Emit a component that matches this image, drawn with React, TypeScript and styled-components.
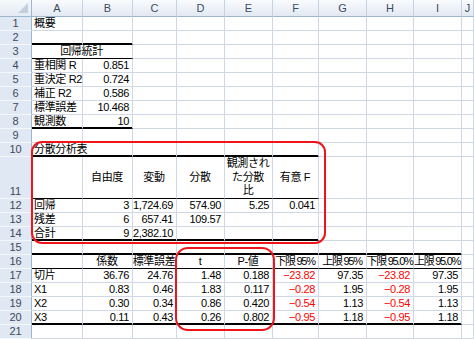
import React from 'react';
import styled, { createGlobalStyle } from 'styled-components';

const GlobalStyle = createGlobalStyle`
  html, body { margin: 0; padding: 0; background: #fff; }
  body { font-family: "Liberation Sans", "Noto Sans CJK JP", sans-serif; }
`;

type Align = 'l' | 'r' | 'c';
type Rule = 'thin' | 'thick';

interface Spec {
  t: React.ReactNode;
  a?: Align;
  red?: boolean;
  span?: number;
  tight?: boolean;
  mid?: boolean;
}

const WIDTHS = [51, 50, 44, 48, 48, 46, 48, 47, 48, 12];
const LETTERS = ['A', 'B', 'C', 'D', 'E', 'F', 'G', 'H', 'I', 'J'];
const ROWS = Array.from({ length: 21 }, (_, i) => i + 1);
const rowHeight = (r: number) => (r === 11 ? 42 : 14);

const n = (t: string, red = false): Spec => ({ t, a: 'r', red });
const l = (t: string): Spec => ({ t });
const h = (t: React.ReactNode, tight = false): Spec => ({ t, a: 'c', tight, mid: true });

const DATA: Record<number, Record<number, Spec>> = {
  1: { 0: l('概要') },
  3: { 0: { t: '回帰統計', a: 'c', span: 2 } },
  4: { 0: l('重相関 R'), 1: n('0.851') },
  5: { 0: l('重決定 R2'), 1: n('0.724') },
  6: { 0: l('補正 R2'), 1: n('0.586') },
  7: { 0: l('標準誤差'), 1: n('10.468') },
  8: { 0: l('観測数'), 1: n('10') },
  10: { 0: { t: '分散分析表', span: 2 } },
  11: {
    1: h('自由度'),
    2: h('変動'),
    3: h('分散'),
    4: h(
      <>
        観測され
        <br />
        た分散
        <br />比
      </>
    ),
    5: h('有意 F'),
  },
  12: { 0: l('回帰'), 1: n('3'), 2: n('1,724.69'), 3: n('574.90'), 4: n('5.25'), 5: n('0.041') },
  13: { 0: l('残差'), 1: n('6'), 2: n('657.41'), 3: n('109.57') },
  14: { 0: l('合計'), 1: n('9'), 2: n('2,382.10') },
  16: {
    1: h('係数'),
    2: h('標準誤差'),
    3: h('t'),
    4: h('P-値'),
    5: h('下限 95%', true),
    6: h('上限 95%', true),
    7: h('下限 95.0%', true),
    8: h('上限 95.0%', true),
  },
  17: { 0: l('切片'), 1: n('36.76'), 2: n('24.76'), 3: n('1.48'), 4: n('0.188'), 5: n('−23.82', true), 6: n('97.35'), 7: n('−23.82', true), 8: n('97.35') },
  18: { 0: l('X1'), 1: n('0.83'), 2: n('0.46'), 3: n('1.83'), 4: n('0.117'), 5: n('−0.28', true), 6: n('1.95'), 7: n('−0.28', true), 8: n('1.95') },
  19: { 0: l('X2'), 1: n('0.30'), 2: n('0.34'), 3: n('0.86'), 4: n('0.420'), 5: n('−0.54', true), 6: n('1.13'), 7: n('−0.54', true), 8: n('1.13') },
  20: { 0: l('X3'), 1: n('0.11'), 2: n('0.43'), 3: n('0.26'), 4: n('0.802'), 5: n('−0.95', true), 6: n('1.18'), 7: n('−0.95', true), 8: n('1.18') },
};

const RULES: Record<number, { kind: Rule; to: number }> = {
  2: { kind: 'thick', to: 1 },
  3: { kind: 'thin', to: 1 },
  8: { kind: 'thick', to: 1 },
  10: { kind: 'thick', to: 5 },
  11: { kind: 'thin', to: 5 },
  14: { kind: 'thick', to: 5 },
  15: { kind: 'thick', to: 8 },
  16: { kind: 'thin', to: 8 },
  20: { kind: 'thick', to: 8 },
};

const Sheet = styled.div`
  position: relative;
  width: 474px;
  height: 339px;
  overflow: hidden;
  background: #fff;
`;

const Grid = styled.div`
  display: grid;
  grid-template-columns: 32px ${WIDTHS.map((w) => `${w}px`).join(' ')};
  grid-template-rows: 17px ${ROWS.map((r) => `${rowHeight(r)}px`).join(' ')};
`;

const Corner = styled.div`
  box-sizing: border-box;
  background: linear-gradient(#f6f9fc, #e3eaf4);
  border-right: 1px solid #9eb6ce;
  border-bottom: 1px solid #9eb6ce;
  display: flex;
  align-items: flex-end;
  justify-content: flex-end;
  padding: 0 3px 3px 0;
`;

const ColHead = styled.div`
  box-sizing: border-box;
  background: linear-gradient(#f9fbfd, #e2e9f3);
  border-right: 1px solid #c5d2e2;
  border-bottom: 1px solid #9eb6ce;
  display: flex;
  align-items: center;
  justify-content: center;
  font-size: 11px;
  color: #3e4a5c;
  overflow: hidden;
`;

const RowHead = styled.div`
  box-sizing: border-box;
  background: #e0e8f3;
  border-right: 1px solid #9eb6ce;
  border-bottom: 1px solid #f4f7fb;
  display: flex;
  align-items: flex-end;
  justify-content: center;
  font-size: 11px;
  line-height: 13px;
  color: #3e4a5c;
`;

const Cell = styled.div<{
  $align: Align;
  $rule?: Rule;
  $red?: boolean;
  $span: number;
  $mid?: boolean;
  $tight?: boolean;
}>`
  grid-column: span ${(p) => p.$span};
  box-sizing: border-box;
  min-width: 0;
  display: flex;
  align-items: ${(p) => (p.$mid ? 'center' : 'flex-end')};
  justify-content: ${(p) => (p.$align === 'r' ? 'flex-end' : p.$align === 'c' ? 'center' : 'flex-start')};
  text-align: ${(p) => (p.$align === 'r' ? 'right' : p.$align === 'c' ? 'center' : 'left')};
  padding: 0 3px 0 2px;
  border-right: 1px solid #d0d7e5;
  border-bottom: 1px solid ${(p) => (p.$rule ? '#000' : '#d0d7e5')};
  box-shadow: ${(p) => (p.$rule === 'thick' ? 'inset 0 -1px 0 #000' : 'none')};
  font-size: 11px;
  line-height: ${(p) => (p.$mid ? '13.5px' : '13px')};
  letter-spacing: ${(p) => (p.$tight ? '-1.3px' : '-0.35px')};
  color: ${(p) => (p.$red ? '#ff0000' : '#000')};
  white-space: nowrap;
`;

const Ring = styled.div<{ $x: number; $y: number; $w: number; $h: number; $r: number }>`
  position: absolute;
  left: ${(p) => p.$x}px;
  top: ${(p) => p.$y}px;
  width: ${(p) => p.$w}px;
  height: ${(p) => p.$h}px;
  border: 2px solid #ee1419;
  border-radius: ${(p) => p.$r}px;
  box-sizing: border-box;
  pointer-events: none;
`;

function renderRow(r: number) {
  const specs = DATA[r] || {};
  const rule = RULES[r];
  const out: React.ReactNode[] = [<RowHead key={`h${r}`}>{r}</RowHead>];
  let c = 0;
  while (c < LETTERS.length) {
    const s = specs[c];
    const span = s?.span ?? 1;
    const ruled = rule && c <= rule.to ? rule.kind : undefined;
    out.push(
      <Cell
        key={`${r}-${c}`}
        $align={s?.a ?? 'l'}
        $red={s?.red}
        $span={span}
        $mid={s?.mid}
        $tight={s?.tight}
        $rule={ruled}
      >
        {s?.t}
      </Cell>
    );
    c += span;
  }
  return out;
}

export default function App() {
  return (
    <>
      <GlobalStyle />
      <Sheet>
        <Grid>
          <Corner>
            <svg width="10" height="10" viewBox="0 0 10 10">
              <polygon points="10,0 10,10 0,10" fill="#c3cedc" />
            </svg>
          </Corner>
          {LETTERS.map((L) => (
            <ColHead key={L}>{L}</ColHead>
          ))}
          {ROWS.map((r) => renderRow(r))}
        </Grid>
        <Ring $x={31} $y={141} $w={295} $h={103} $r={11} />
        <Ring $x={175} $y={247} $w={100} $h={84} $r={13} />
      </Sheet>
    </>
  );
}
